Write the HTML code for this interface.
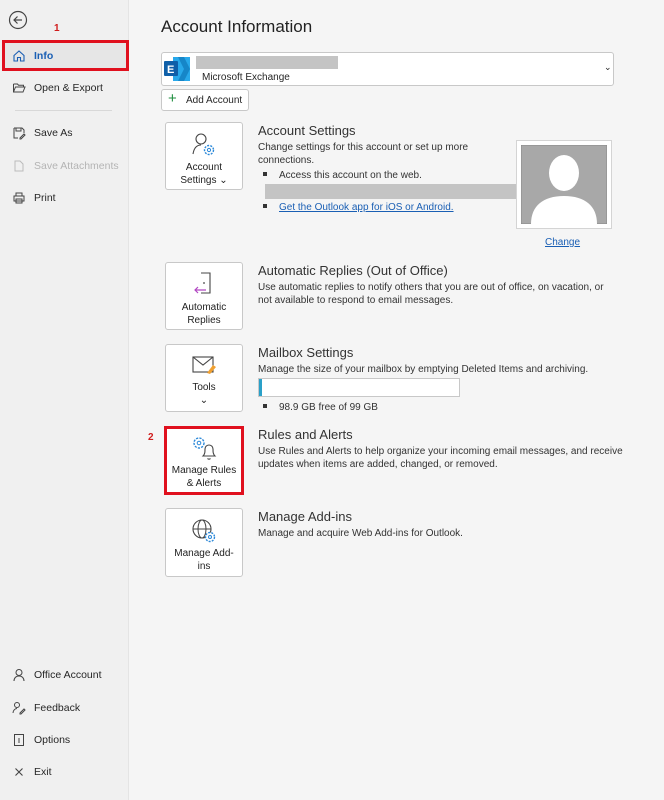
<!DOCTYPE html>
<html><head><meta charset="utf-8"><style>
*{margin:0;padding:0;box-sizing:border-box}
body{width:664px;height:800px;background:#f5f5f5;font-family:"Liberation Sans",sans-serif;color:#262626;position:relative;overflow:hidden;font-size:10px}
.a{position:absolute;white-space:nowrap}
#side{position:absolute;left:0;top:0;width:129px;height:800px;background:#f0f0f0;border-right:1px solid #e4e4e4}
.ni{position:absolute;left:12px;font-size:10.5px;display:flex;align-items:center;gap:8px}
.ni svg{width:14px;height:14px}
.h{position:absolute;font-size:13px;color:#333}
.t{position:absolute;font-size:10px;line-height:13px;color:#333}
.btn{position:absolute;left:165px;width:78px;height:68px;background:#fff;border:1px solid #c8c8c8;border-radius:3px;text-align:center;font-size:10px;line-height:13px;color:#222}
.btn svg{display:block;margin:8px auto 2px}
.bul{display:inline-block;width:4px;height:4px;background:#333;margin:0 12px 2px 5px;vertical-align:middle}
a{color:#1a5fb4;text-decoration:underline}
</style></head><body>
<div id="side">
<svg class="a" style="left:8px;top:10px" width="20" height="20" viewBox="0 0 20 20"><circle cx="10" cy="10" r="8.5" fill="none" stroke="#444" stroke-width="1.2"/><path d="M14 10H6M9.5 6.5L6 10l3.5 3.5" fill="none" stroke="#444" stroke-width="1.2"/></svg>
<div class="a" style="left:54px;top:23px;color:#d01c1c;font-weight:bold;font-size:10px">1</div>
<div class="a" style="left:2px;top:40px;width:127px;height:31px;border:3px solid #e0101e;background:#e6e6e6"></div>
<div class="ni" style="top:49px;color:#1a5fb4;font-weight:bold"><svg viewBox="0 0 14 14"><path d="M2 6.5L7 2l5 4.5V12H8.5V8.5h-3V12H2z" fill="none" stroke="#1a5fb4" stroke-width="1.1"/></svg>Info</div>
<div class="ni" style="top:81px"><svg viewBox="0 0 14 14"><path d="M1.5 3h4l1 1.2h5V6M1.5 3v8h9.5l2-5H3.5l-2 5" fill="none" stroke="#444" stroke-width="1"/></svg>Open &amp; Export</div>
<div class="a" style="left:15px;top:110px;width:97px;height:1px;background:#d8d8d8"></div>
<div class="ni" style="top:126px"><svg viewBox="0 0 14 14"><path d="M2 2h8l2 2v3M2 2v10h4M4 2v3h5V2M8 12l4-4 1 1-4 4H8z" fill="none" stroke="#444" stroke-width="1"/></svg>Save As</div>
<div class="ni" style="top:159px;color:#b4b4b4"><svg viewBox="0 0 14 14"><path d="M3 2h5l3 3v7H3z" fill="none" stroke="#bbb" stroke-width="1"/></svg>Save Attachments</div>
<div class="ni" style="top:191px"><svg viewBox="0 0 14 14"><path d="M4 5V2h6v3M2 5h10v5H2zM4 8h6v4H4z" fill="none" stroke="#444" stroke-width="1"/></svg>Print</div>
<div class="ni" style="top:668px"><svg viewBox="0 0 14 14"><circle cx="7" cy="4.5" r="3" fill="none" stroke="#444"/><path d="M2 13c0-3 2-5 5-5s5 2 5 5" fill="none" stroke="#444"/></svg>Office Account</div>
<div class="ni" style="top:701px"><svg viewBox="0 0 14 14"><circle cx="5" cy="4" r="2.5" fill="none" stroke="#444"/><path d="M1 12c0-2.5 2-4.5 4-4.5M8 12l4-4 1 1-4 4H8z" fill="none" stroke="#444"/></svg>Feedback</div>
<div class="ni" style="top:733px"><svg viewBox="0 0 14 14"><rect x="2.5" y="1.5" width="9" height="11" fill="none" stroke="#444"/><path d="M7 5v5" stroke="#444"/></svg>Options</div>
<div class="ni" style="top:765px"><svg viewBox="0 0 14 14"><path d="M3.5 3.5l7 7M10.5 3.5l-7 7" stroke="#444" stroke-width="1.1"/></svg>Exit</div>
</div>

<div class="a" style="left:161px;top:17px;font-size:17px;color:#222">Account Information</div>
<div class="a" style="left:161px;top:52px;width:453px;height:34px;background:#fff;border:1px solid #c8c8c8;border-radius:3px"></div>
<svg class="a" style="left:164px;top:57px" width="26" height="24" viewBox="0 0 26 24"><path d="M9 0h17v24H9z" fill="#28a8ea"/><path d="M14 0l6 12-6 12h6l6-12-6-12z" fill="#0a6fb0" opacity=".6"/><rect x="0" y="4" width="14" height="15" rx="1" fill="#0f5fa8"/><text x="3" y="16" font-size="11" font-weight="bold" fill="#fff" font-family="Liberation Sans">E</text></svg>
<div class="a" style="left:196px;top:56px;width:142px;height:13px;background:#c4c4c4"></div>
<div class="a" style="left:202px;top:72px;font-size:10px">Microsoft Exchange</div>
<div class="a" style="left:604px;top:62px;font-size:9px">&#8964;</div>
<div class="a" style="left:161px;top:89px;width:88px;height:22px;background:#fff;border:1px solid #c8c8c8;border-radius:3px;font-size:10px;padding:5px 0 0 7px"><span style="color:#1e8e3e;font-size:15px;position:absolute;left:6px;top:0px">+</span><span style="margin-left:17px">Add Account</span></div>

<div class="btn" style="top:122px"><svg width="28" height="28" viewBox="0 0 28 28"><circle cx="11" cy="8" r="5" fill="none" stroke="#444" stroke-width="1.1"/><path d="M3 23c1-6 4-9 8-9" fill="none" stroke="#444" stroke-width="1.1"/><circle cx="19" cy="19" r="4.5" fill="none" stroke="#2b88d8" stroke-width="1.4" stroke-dasharray="2 1.2"/><circle cx="19" cy="19" r="1.6" fill="none" stroke="#2b88d8"/></svg>Account<br>Settings &#8964;</div>
<div class="h" style="left:258px;top:123px">Account Settings</div>
<div class="t" style="left:258px;top:141px">Change settings for this account or set up more<br>connections.</div>
<div class="t" style="left:258px;top:169px"><span class="bul"></span>Access this account on the web.</div>
<div class="a" style="left:265px;top:184px;width:251px;height:15px;background:#c4c4c4"></div>
<div class="t" style="left:258px;top:201px"><span class="bul"></span><a>Get the Outlook app for iOS or Android.</a></div>
<div class="a" style="left:516px;top:140px;width:96px;height:89px;background:#fff;border:1px solid #d4d4d4;padding:4px"><svg width="86" height="79" viewBox="0 0 86 79"><rect width="86" height="79" fill="#a8a8a8" stroke="#888"/><ellipse cx="43" cy="28" rx="15" ry="18" fill="#fff"/><path d="M10 79c0-18 12-28 33-28s33 10 33 28z" fill="#fff"/></svg></div>
<div class="t" style="left:545px;top:236px"><a>Change</a></div>

<div class="btn" style="top:262px"><svg width="28" height="28" viewBox="0 0 28 28"><path d="M11 2h9v20h-9" fill="none" stroke="#444" stroke-width="1.1"/><circle cx="14" cy="12" r=".9" fill="#444"/><path d="M16 19H5M8 16l-3 3 3 3" fill="none" stroke="#b146c2" stroke-width="1.2"/></svg>Automatic<br>Replies</div>
<div class="h" style="left:258px;top:263px">Automatic Replies (Out of Office)</div>
<div class="t" style="left:258px;top:281px">Use automatic replies to notify others that you are out of office, on vacation, or<br>not available to respond to email messages.</div>

<div class="btn" style="top:344px"><svg width="28" height="26" viewBox="0 0 28 26"><rect x="3" y="4" width="20" height="15" fill="none" stroke="#444" stroke-width="1.1"/><path d="M3 4l10 8 10-8" fill="none" stroke="#444" stroke-width="1.1"/><path d="M17 20l6-8 3 2-6 7z" fill="#f0a030"/></svg>Tools<br>&#8964;</div>
<div class="h" style="left:258px;top:345px">Mailbox Settings</div>
<div class="t" style="left:258px;top:363px">Manage the size of your mailbox by emptying Deleted Items and archiving.</div>
<div class="a" style="left:258px;top:378px;width:202px;height:19px;background:#fff;border:1px solid #c8c8c8"><div style="width:3px;height:17px;background:#2aa0c8"></div></div>
<div class="t" style="left:258px;top:401px"><span class="bul"></span>98.9 GB free of 99 GB</div>

<div class="a" style="left:148px;top:432px;color:#d01c1c;font-weight:bold;font-size:10px">2</div>
<div class="btn" style="top:426px;left:164px;width:80px;height:69px;border:3px solid #e0101e;border-radius:0"><svg width="30" height="28" viewBox="0 0 30 28" style="margin-top:5px"><circle cx="10" cy="9" r="5" fill="none" stroke="#2b88d8" stroke-width="1.4" stroke-dasharray="2.2 1.2"/><circle cx="10" cy="9" r="1.8" fill="none" stroke="#2b88d8"/><path d="M14 22c2-2 2-4 2-7a4 4 0 018 0c0 3 0 5 2 7zM18.5 24.5a2 2 0 003 0" fill="none" stroke="#444" stroke-width="1.1"/></svg>Manage Rules<br>&amp; Alerts</div>
<div class="h" style="left:258px;top:427px">Rules and Alerts</div>
<div class="t" style="left:258px;top:445px">Use Rules and Alerts to help organize your incoming email messages, and receive<br>updates when items are added, changed, or removed.</div>

<div class="btn" style="top:508px;height:69px"><svg width="28" height="28" viewBox="0 0 28 28"><circle cx="12" cy="12" r="9" fill="none" stroke="#444" stroke-width="1.1"/><ellipse cx="12" cy="12" rx="4" ry="9" fill="none" stroke="#444"/><path d="M3 12h18" stroke="#444"/><circle cx="20" cy="20" r="4.5" fill="#fff" stroke="#2b88d8" stroke-width="1.4" stroke-dasharray="2 1.2"/><circle cx="20" cy="20" r="1.5" fill="none" stroke="#2b88d8"/></svg>Manage Add-<br>ins</div>
<div class="h" style="left:258px;top:509px">Manage Add-ins</div>
<div class="t" style="left:258px;top:527px">Manage and acquire Web Add-ins for Outlook.</div>
</body></html>
